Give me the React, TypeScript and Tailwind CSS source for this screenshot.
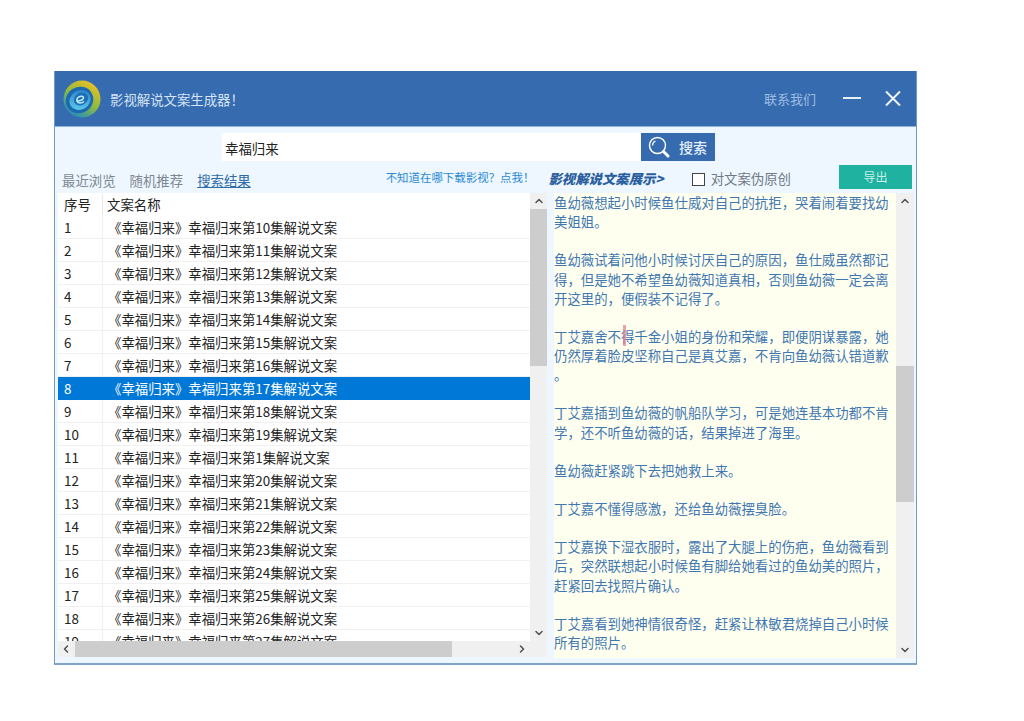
import { ChevronDown, ChevronLeft, ChevronRight, ChevronUp } from 'lucide-react'

const episodes = [10, 11, 12, 13, 14, 15, 16, 17, 18, 19, 1, 20, 21, 22, 23, 24, 25, 26, 27]

// null is an empty line in the text box
const lines: (string | null)[] = [
  '鱼幼薇想起小时候鱼仕威对自己的抗拒，哭着闹着要找幼',
  '美姐姐。',
  null,
  '鱼幼薇试着问他小时候讨厌自己的原因，鱼仕威虽然都记',
  '得，但是她不希望鱼幼薇知道真相，否则鱼幼薇一定会离',
  '开这里的，便假装不记得了。',
  null,
  '丁艾嘉舍不得千金小姐的身份和荣耀，即便阴谋暴露，她',
  '仍然厚着脸皮坚称自己是真艾嘉，不肯向鱼幼薇认错道歉',
  '。',
  null,
  '丁艾嘉插到鱼幼薇的帆船队学习，可是她连基本功都不肯',
  '学，还不听鱼幼薇的话，结果掉进了海里。',
  null,
  '鱼幼薇赶紧跳下去把她救上来。',
  null,
  '丁艾嘉不懂得感激，还给鱼幼薇摆臭脸。',
  null,
  '丁艾嘉换下湿衣服时，露出了大腿上的伤疤，鱼幼薇看到',
  '后，突然联想起小时候鱼有脚给她看过的鱼幼美的照片，',
  '赶紧回去找照片确认。',
  null,
  '丁艾嘉看到她神情很奇怪，赶紧让林敏君烧掉自己小时候',
  '所有的照片。',
]

const Logo = () => (
  <svg width="38" height="38" viewBox="0 0 38 38">
    <defs>
      <linearGradient id="ring" x1="0.8" y1="0" x2="0.2" y2="1">
        <stop offset="0" stopColor="#f4bf26" />
        <stop offset="0.5" stopColor="#8fbb3c" />
        <stop offset="1" stopColor="#1688cf" />
      </linearGradient>
      <linearGradient id="inner" x1="0.9" y1="0" x2="0.1" y2="1">
        <stop offset="0" stopColor="#2a7cc4" />
        <stop offset="1" stopColor="#5fd0ef" />
      </linearGradient>
    </defs>
    <circle cx="19" cy="19" r="18.500" fill="url(#ring)" />
    <ellipse cx="16.500" cy="20" rx="14" ry="13" fill="#1d68b2" transform="rotate(-30 16.500 20)" />
    <ellipse cx="17" cy="20" rx="11" ry="9.500" fill="url(#inner)" transform="rotate(-30 17 20)" />
    <ellipse cx="18" cy="19" rx="7.500" ry="6" fill="#1b70b8" transform="rotate(-30 18 19)" />
    <path d="M14 21c3.500 0 7-1.500 6.500-3.500s-4.500-1.500-6 .5-.5 5 2.500 5c1.500 0 3-.5 4-1.500" fill="none" stroke="#c4ecf8" strokeWidth="1.500" />
  </svg>
)

const SearchGlass = () => (
  <svg width="24" height="24" viewBox="0 0 24 24" fill="none" stroke="#fff">
    <circle cx="10.500" cy="10.500" r="8" strokeWidth="1.500" />
    <path d="M5.500 10.500a5 5 0 0 1 3-4.500" strokeWidth="1.200" />
    <path d="M16.500 16.500l4.500 4.500" strokeWidth="3" strokeLinecap="round" />
  </svg>
)

export default function App() {
  return (
    <div
      className="min-h-[721px] bg-white pl-[54px] pt-[71px]"
      style={{ fontFamily: '"Noto Sans CJK SC", "Noto Sans", sans-serif' }}
    >
      <div className="flex h-[594px] w-[863px] flex-col border-x border-b-2 border-x-[#6f9bcb] border-b-[#7ea3cc] bg-[#eef7ff]">
        <div className="flex h-[56px] shrink-0 items-center border-b border-[#8fb4da] bg-[#366bb0] pl-[8px]">
          <Logo />
          <span className="ml-[9px] translate-y-[1px] text-[13.400px] text-[#d5e3f3]">影视解说文案生成器！</span>
          <span className="ml-auto text-[13px] text-[#9dbce0]">联系我们</span>
          <svg className="ml-[26px]" width="20" height="20" viewBox="0 0 20 20" stroke="#e8f0fa" strokeWidth="2">
            <path d="M1 9h18" />
          </svg>
          <svg className="ml-[22px] mr-[14px]" width="18" height="18" viewBox="0 0 18 18" stroke="#eef4fb" strokeWidth="2">
            <path d="M2 1.500l14 14M16 1.500l-14 14" />
          </svg>
        </div>

        <div className="mt-[6px] flex h-[28px] shrink-0 pl-[167px]">
          <div className="flex w-[419px] items-center bg-white pl-[3px] pt-[2px] text-[13.400px] text-[#222]">幸福归来</div>
          <div className="flex w-[74px] items-center bg-[#366bb0] pl-[6px] text-[14px] font-medium text-[#e6eef8]">
            <SearchGlass />
            <span className="ml-[8px]">搜索</span>
          </div>
        </div>

        <div className="flex h-[32px] shrink-0 items-center whitespace-nowrap pl-[7px] pt-[6px] text-[13.400px]">
          <span className="text-[#7b8792]">最近浏览</span>
          <span className="ml-[14px] text-[#7b8792]">随机推荐</span>
          <span className="ml-[14px] text-[#2f6ba8] underline">搜索结果</span>
          <span className="ml-[135px] -translate-y-[2px] text-[11.450px] text-[#2a8ad6]">不知道在哪下载影视？点我！</span>
          <span className="ml-[14px] -translate-y-[2px] font-black italic text-[#2c5f9e]">影视解说文案展示&gt;</span>
          <span className="ml-[28px] h-[13px] w-[13px] shrink-0 -translate-y-[1px] border border-[#444] bg-white" />
          <span className="ml-[6px] -translate-y-[2px] text-[#6f7a84]">对文案伪原创</span>
          <span className="ml-[48px] flex h-[24px] w-[73px] shrink-0 -translate-y-[2px] items-center justify-center self-start bg-[#20b2a0] text-[12px] text-[#c9efe9]">
            导出
          </span>
        </div>

        <div className="flex min-h-0 flex-1 pb-[6px] pl-[3px]">
          <div className="flex w-[489px] shrink-0 flex-col">
            <div className="flex min-h-0 flex-1">
              <div className="min-h-0 flex-1 overflow-hidden bg-white">
                <div className="flex h-[23px] items-center text-[13.400px] text-[#222]">
                  <span className="w-[45px] border-r border-[#e8e8e8] pl-[6px]">序号</span>
                  <span className="pl-[4px]">文案名称</span>
                </div>
                {episodes.map((ep, i) => (
                  <div
                    key={ep}
                    className={
                      i === 7
                        ? 'flex h-[23px] items-center bg-[#0078d7] text-[13.400px] text-white'
                        : 'flex h-[23px] items-center border-b border-[#f0f0f0] text-[13.400px] text-[#222]'
                    }
                  >
                    <span className={i === 7 ? 'w-[45px] pl-[6px]' : 'flex h-full w-[45px] items-center border-r border-[#f0f0f0] pl-[6px]'}>
                      {i + 1}
                    </span>
                    <span className="pl-[5px]">《幸福归来》幸福归来第{ep}集解说文案</span>
                  </div>
                ))}
              </div>
              <div className="flex w-[17px] shrink-0 flex-col items-center bg-[#f0f0f0] text-[#505050]">
                <ChevronUp size={12} strokeWidth={3} className="my-[2px] h-[12px]" />
                <div className="h-[157px] w-full bg-[#cdcdcd]" />
                <ChevronDown size={12} strokeWidth={3} className="mb-[2px] mt-auto" />
              </div>
            </div>
            <div className="flex h-[16px] shrink-0 items-center bg-[#f0f0f0] text-[#505050]">
              <ChevronLeft size={12} strokeWidth={3} className="ml-[2px]" />
              <div className="ml-[3px] h-full w-[377px] bg-[#cdcdcd]" />
              <ChevronRight size={12} strokeWidth={3} className="ml-auto mr-[19px]" />
            </div>
          </div>

          <div className="ml-[7px] flex h-[465px] w-[360px] bg-[#fffff0]">
            <div className="w-[342px] overflow-hidden text-[13.400px] leading-[19.130px] text-[#3f77b0]">
              {lines.map((line, i) =>
                line === null ? (
                  <div key={i} className="h-[19.130px]" />
                ) : i === 7 ? (
                  <div key={i} className="whitespace-nowrap">
                    丁艾嘉舍不
                    <span className="relative">
                      <span className="absolute left-[2px] top-[-1px] h-[21px] w-[3px] bg-[#e07a90]/70" />
                      得
                    </span>
                    千金小姐的身份和荣耀，即便阴谋暴露，她
                  </div>
                ) : (
                  <div key={i} className="whitespace-nowrap">{line}</div>
                ),
              )}
            </div>
            <div className="flex w-[18px] shrink-0 flex-col items-center bg-[#f0f0f0] text-[#505050]">
              <ChevronUp size={12} strokeWidth={3} className="mt-[2px]" />
              <div className="mt-[159px] h-[136px] w-full bg-[#cdcdcd]" />
              <ChevronDown size={12} strokeWidth={3} className="mb-[2px] mt-auto" />
            </div>
          </div>
        </div>
      </div>
    </div>
  )
}
